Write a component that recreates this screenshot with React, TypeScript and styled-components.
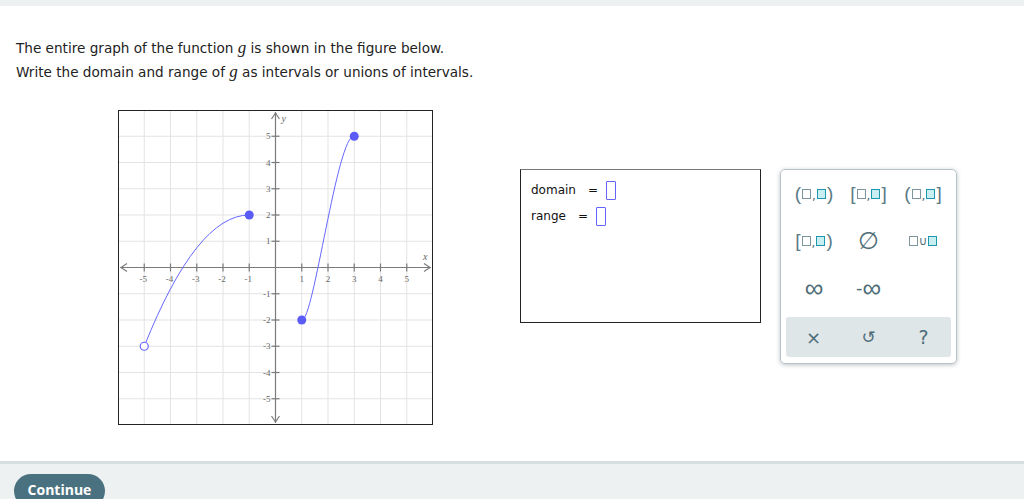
import React from 'react';
import styled, { createGlobalStyle } from 'styled-components';

const GlobalStyle = createGlobalStyle`
    body {
        margin: 0;
        background: #fff;
        font-family: 'DejaVu Sans', Verdana, sans-serif;
    }
`;

const Page = styled.div`
    width: 1024px;
    height: 499px;
    overflow: hidden;
    display: flex;
    flex-direction: column;
    border-top: 6px solid #edf1f2;
    box-sizing: border-box;
`;

const Main = styled.div`
    flex: 1;
    padding: 30px 0 0 16px;
`;

const Question = styled.div`
    font-size: 13.6px;
    line-height: 23px;
    color: #222;
`;

const MathVar = styled.span`
    font-family: 'Liberation Serif', 'DejaVu Serif', serif;
    font-style: italic;
    font-size: 17px;
`;

const WorkRow = styled.div`
    display: flex;
    align-items: flex-start;
    margin-top: 26px;
`;

const GraphFrame = styled.div`
    margin-left: 102px;
    width: 313px;
    height: 313px;
    border: 1px solid #222;
`;

const AnswerBox = styled.div`
    margin: 59px 19px 0 87px;
    width: 219px;
    height: 134px;
    border: 1px solid #222;
    border-top-color: #777;
    padding: 10px 10px 8px;
    display: flex;
    flex-direction: column;
    gap: 6px;
`;

const AnswerLine = styled.div`
    display: flex;
    align-items: center;
    font-size: 12px;
    color: #111;
    height: 20px;
`;

const Equals = styled.span`
    margin: 0 8px 0 12px;
`;

const Slot = styled.span`
    display: inline-block;
    width: 8px;
    height: 17px;
    border: 1.5px solid #6464ff;
    border-radius: 1px;
`;

const Keypad = styled.div`
    margin-top: 59px;
    width: 177px;
    height: 195px;
    border: 1px solid #b6c3c8;
    border-radius: 5px;
    box-shadow: 0 1px 4px rgba(60, 80, 90, 0.35);
    padding: 0 5px 6px;
    box-sizing: border-box;
    display: flex;
    flex-direction: column;
`;

const KeyGrid = styled.div`
    display: grid;
    grid-template-columns: 56px 53px 56px;
    grid-auto-rows: 47px;
`;

const Key = styled.div<{ size?: number }>`
    display: flex;
    align-items: center;
    justify-content: center;
    color: #4e6d78;
    font-size: ${(p) => p.size || 16}px;
    font-family: 'DejaVu Sans', sans-serif;
`;

const Bracket = styled.span`
    font-size: 19px;
    font-family: 'Liberation Sans', sans-serif;
    color: #5b7a85;
    line-height: 1;
`;

const Comma = styled.span`
    font-size: 12px;
    margin: 4px 1px 0;
`;

const OpenSquare = styled.span`
    display: inline-block;
    width: 7px;
    height: 8px;
    border: 1.5px solid #7d969e;
    margin-left: 1px;
`;

const FilledSquare = styled.span`
    display: inline-block;
    width: 7px;
    height: 8px;
    border: 1.5px solid #1b98ad;
    background: #c9eef2;
    margin-right: 1px;
`;

const Union = styled.span`
    font-size: 12px;
    margin: 0 1px;
`;

const Infinity = styled.span`
    font-family: 'Liberation Sans', sans-serif;
    font-size: 26px;
    line-height: 1;
`;

const ActionBar = styled.div`
    margin-top: 6px;
    height: 41px;
    background: #dfe6e8;
    border-radius: 3px;
    display: grid;
    grid-template-columns: 55px 55px 55px;
    align-items: center;
    justify-items: center;
    color: #4e6d78;
`;

const Footer = styled.div`
    height: 38px;
    box-sizing: border-box;
    border-top: 3px solid #d6dee1;
    background: #eef1f2;
    padding: 10px 0 0 14px;
`;

const ContinueButton = styled.button`
    width: 91px;
    height: 34px;
    border: none;
    border-radius: 17px;
    background: #4a717f;
    color: #fff;
    font-family: 'Open Sans', sans-serif;
    font-weight: 700;
    font-size: 14px;
    padding: 6px 0 0;
    display: flex;
    justify-content: center;
`;

const U = 26.25;
const C = 157.5;
const px = (x: number) => C + x * U;
const py = (y: number) => C - y * U;
const ticks = [-5, -4, -3, -2, -1, 1, 2, 3, 4, 5];

function Graph() {
    const grid = [-6, -5, -4, -3, -2, -1, 1, 2, 3, 4, 5, 6];
    const curveColor = '#6767ff';
    return (
        <svg width="313" height="313" viewBox="1 1 313 313">
            {grid.map((g) => (
                <g key={g} stroke="#e3e3e3" strokeWidth="1">
                    <line x1={px(g)} y1={0} x2={px(g)} y2={315} />
                    <line x1={0} y1={py(g)} x2={315} y2={py(g)} />
                </g>
            ))}
            <g stroke="#7b7b7b" strokeWidth="1.2" fill="none">
                <line x1={2} y1={C} x2={313} y2={C} />
                <line x1={C} y1={2} x2={C} y2={313} />
                <polyline points={`9,${C - 4} 3,${C} 9,${C + 4}`} />
                <polyline points={`306,${C - 4} 312,${C} 306,${C + 4}`} />
                <polyline points={`${C - 4},9 ${C},3 ${C + 4},9`} />
                <polyline points={`${C - 4},306 ${C},312 ${C + 4},306`} />
                {ticks.map((t) => (
                    <g key={t}>
                        <line x1={px(t)} y1={C - 4} x2={px(t)} y2={C + 4} />
                        <line x1={C - 4} y1={py(t)} x2={C + 4} y2={py(t)} />
                    </g>
                ))}
            </g>
            <g fontFamily="'Liberation Serif', serif" fontSize="9" fill="#666">
                {ticks.map((t) => (
                    <text key={'x' + t} x={px(t) + (t < 0 ? -1 : 0)} y={C + 14} textAnchor="middle">
                        {t}
                    </text>
                ))}
                {ticks.map((t) => (
                    <text key={'y' + t} x={C - 5} y={py(t) + 3} textAnchor="end">
                        {t}
                    </text>
                ))}
                <text x={C + 6} y={12} fontStyle="italic" fontSize="10">y</text>
                <text x={305} y={C - 8} fontStyle="italic" fontSize="10">x</text>
            </g>
            <g fill="none" stroke={curveColor} strokeWidth="1">
                <path d={`M${px(-5)},${py(-3)} Q${px(-3)},${py(2)} ${px(-1)},${py(2)}`} />
                <path
                    d={`M${px(1)},${py(-2)} C${px(1.45)},${py(-2.1)} ${px(2.35)},${py(5.1)} ${px(3)},${py(5)}`}
                />
            </g>
            <circle cx={px(-5)} cy={py(-3)} r="4" fill="#fff" stroke={curveColor} strokeWidth="1.2" />
            <circle cx={px(-1)} cy={py(2)} r="4.5" fill="#5b5bf7" />
            <circle cx={px(1)} cy={py(-2)} r="4.5" fill="#5b5bf7" />
            <circle cx={px(3)} cy={py(5)} r="4.5" fill="#5b5bf7" />
        </svg>
    );
}

function Interval({ open, close }: { open: string; close: string }) {
    return (
        <Key>
            <Bracket>{open}</Bracket>
            <OpenSquare />
            <Comma>,</Comma>
            <FilledSquare />
            <Bracket>{close}</Bracket>
        </Key>
    );
}

export default function App() {
    return (
        <>
            <GlobalStyle />
            <Page>
                <Main>
                    <Question>
                        <div>
                            The entire graph of the function <MathVar>g</MathVar> is shown in the figure below.
                        </div>
                        <div>
                            Write the domain and range of <MathVar>g</MathVar> as intervals or unions of intervals.
                        </div>
                    </Question>
                    <WorkRow>
                        <GraphFrame>
                            <Graph />
                        </GraphFrame>
                        <AnswerBox>
                            <AnswerLine>
                                domain<Equals>=</Equals>
                                <Slot />
                            </AnswerLine>
                            <AnswerLine>
                                range<Equals>=</Equals>
                                <Slot />
                            </AnswerLine>
                        </AnswerBox>
                        <Keypad>
                            <KeyGrid>
                                <Interval open="(" close=")" />
                                <Interval open="[" close="]" />
                                <Interval open="(" close="]" />
                                <Interval open="[" close=")" />
                                <Key size={24}>∅</Key>
                                <Key>
                                    <OpenSquare />
                                    <Union>∪</Union>
                                    <FilledSquare />
                                </Key>
                                <Key>
                                    <Infinity>∞</Infinity>
                                </Key>
                                <Key size={18}>
                                    -<Infinity>∞</Infinity>
                                </Key>
                                <Key />
                            </KeyGrid>
                            <ActionBar>
                                <Key size={18}>×</Key>
                                <Key size={17}>↺</Key>
                                <Key size={19}>?</Key>
                            </ActionBar>
                        </Keypad>
                    </WorkRow>
                </Main>
                <Footer>
                    <ContinueButton>Continue</ContinueButton>
                </Footer>
            </Page>
        </>
    );
}
